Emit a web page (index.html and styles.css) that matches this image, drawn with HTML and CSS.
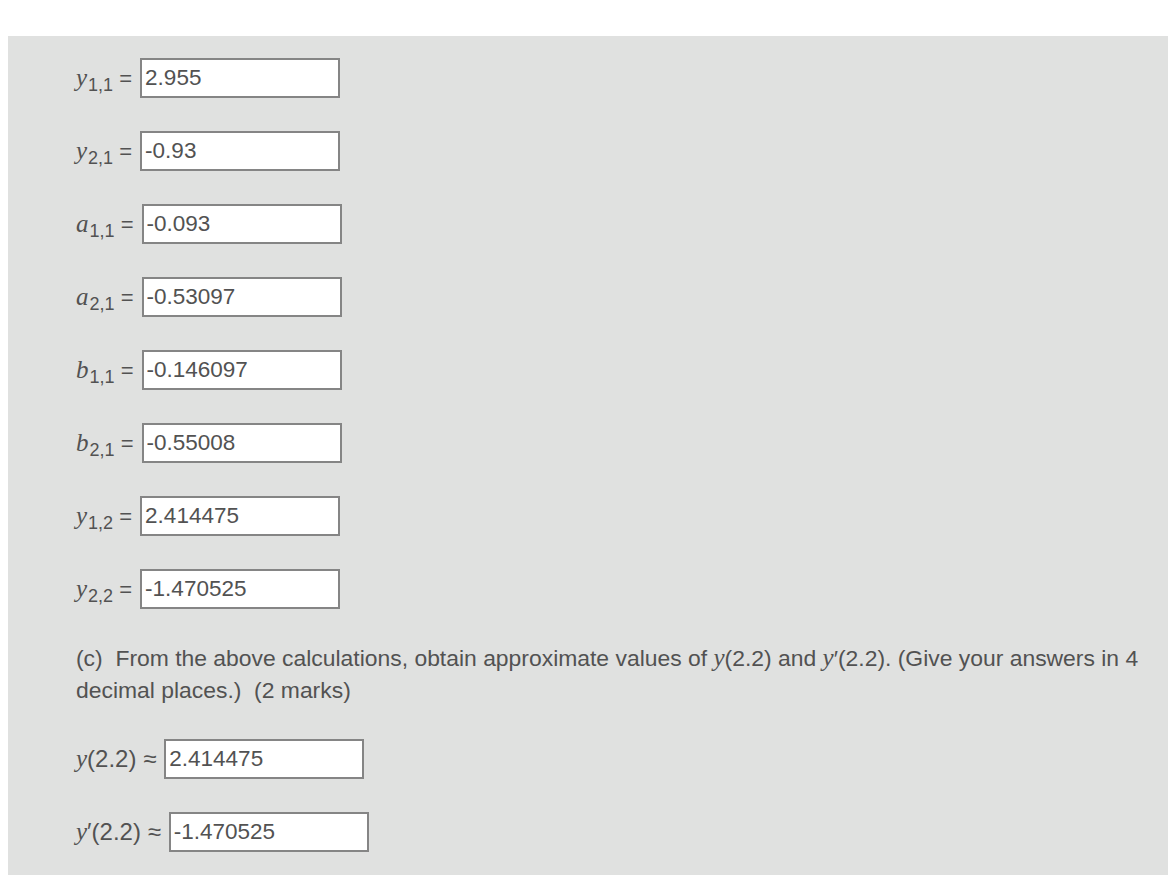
FILE: index.html
```html
<!DOCTYPE html>
<html>
<head>
<meta charset="utf-8">
<link rel="stylesheet" href="styles.css">
</head>
<body>
<div class="panel">
  <div class="row"><span class="lbl"><span class="mi">y</span><span class="sb">1,1</span> =</span><input class="ans" value="2.955"></div>
  <div class="row"><span class="lbl"><span class="mi">y</span><span class="sb">2,1</span> =</span><input class="ans" value="-0.93"></div>
  <div class="row"><span class="lbl"><span class="mi">a</span><span class="sb">1,1</span> =</span><input class="ans" value="-0.093"></div>
  <div class="row"><span class="lbl"><span class="mi">a</span><span class="sb">2,1</span> =</span><input class="ans" value="-0.53097"></div>
  <div class="row"><span class="lbl"><span class="mi">b</span><span class="sb">1,1</span> =</span><input class="ans" value="-0.146097"></div>
  <div class="row"><span class="lbl"><span class="mi">b</span><span class="sb">2,1</span> =</span><input class="ans" value="-0.55008"></div>
  <div class="row"><span class="lbl"><span class="mi">y</span><span class="sb">1,2</span> =</span><input class="ans" value="2.414475"></div>
  <div class="row"><span class="lbl"><span class="mi">y</span><span class="sb">2,2</span> =</span><input class="ans" value="-1.470525"></div>
  <p class="q">(c)&nbsp; From the above calculations, obtain approximate values of <span class="mi">y</span>(2.2) and <span class="mi">y</span>′(2.2). (Give your answers in 4 decimal places.)&nbsp; (2 marks)</p>
  <div class="row"><span class="lbl approx"><span class="mi">y</span>(2.2) ≈</span><input class="ans" value="2.414475"></div>
  <div class="row"><span class="lbl approx"><span class="mi">y</span>′(2.2) ≈</span><input class="ans" value="-1.470525"></div>
</div>
</body>
</html>
```
FILE: styles.css
```css
html, body {
  margin: 0;
  padding: 0;
  background: #ffffff;
}
body {
  font-family: "Liberation Sans", Arial, sans-serif;
  color: #525252;
}
.panel {
  margin: 36px 0 0 8px;
  padding: 22px 16px 23px 68px;
  background: #e0e1e0;
  display: flex;
  flex-direction: column;
  gap: 33px;
}
.row {
  display: flex;
  align-items: center;
  gap: 8px;
  height: 40px;
}
.lbl {
  font-size: 22px;
  white-space: nowrap;
}
.lbl.approx {
  font-size: 24px;
}
.mi {
  font-family: "Liberation Serif", "Times New Roman", serif;
  font-style: italic;
  font-size: 25px;
}
.sb {
  font-size: 18px;
  position: relative;
  top: 5px;
  margin-left: 1px;
}
.ans {
  box-sizing: border-box;
  width: 200px;
  height: 40px;
  border: 2px solid #858585;
  background: #ffffff;
  font-family: "Liberation Sans", Arial, sans-serif;
  font-size: 22.5px;
  color: #525252;
  padding: 0 3px;
  margin: 0;
  outline: none;
}
.q {
  margin: 0;
  font-size: 22.9px;
  line-height: 32px;
  max-width: 1074px;
}
.q .mi {
  font-size: 25px;
}
```
